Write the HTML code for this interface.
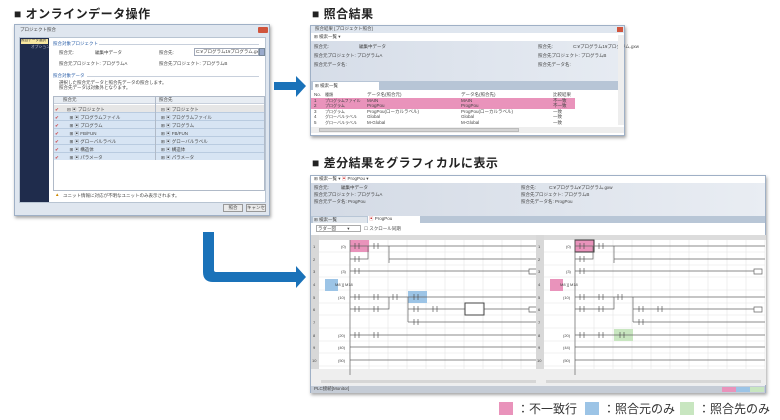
<!DOCTYPE html>
<html><head><meta charset="utf-8"><style>
*{margin:0;padding:0;box-sizing:border-box}
body{width:780px;height:420px;background:#fff;position:relative;overflow:hidden;font-family:"Liberation Sans","Noto Sans CJK JP",sans-serif;color:#333}
.a{position:absolute}
.h{font-size:12px;font-weight:bold;color:#222;letter-spacing:0.5px}
.t{font-size:4.5px;color:#444;white-space:nowrap;line-height:1}
.win{border:1px solid #9fb0c6;background:#f0f0f0;box-shadow:1px 2px 3px rgba(0,0,0,.35)}
</style></head><body>

<div class="a h" style="left:14px;top:5px">■ オンラインデータ操作</div>
<div class="a h" style="left:312px;top:5px">■ 照合結果</div>
<div class="a h" style="left:312px;top:154px">■ 差分結果をグラフィカルに表示</div>

<!-- Window 1 -->
<div class="a win" style="left:14px;top:24px;width:256px;height:192px;background:#dfe6ef">
  <div class="a t" style="left:5px;top:3px">プロジェクト照合</div>
  <div class="a" style="left:243px;top:2px;width:10px;height:6px;background:#d0553d;border-radius:1px"></div>
  <div class="a" style="left:4px;top:12px;width:247px;height:166px;background:#fff;border:1px solid #b8c4d2"></div>
  <div class="a" style="left:5px;top:13px;width:29px;height:164px;background:#1f2c4c"></div>
  <div class="a t" style="left:6px;top:14px;width:27px;height:5px;background:#f8e7a0;font-size:3.6px;color:#333;overflow:hidden">照合データ選択</div>
  <div class="a t" style="left:16px;top:21px;font-size:3.8px;color:#ccd">オプション</div>
  <div class="a t" style="left:38px;top:17px;color:#2a5ea8">照合対象プロジェクト</div>
  <div class="a" style="left:84px;top:19px;width:160px;height:1px;background:#c8d0dc"></div>
  <div class="a t" style="left:44px;top:26px">照合元:</div>
  <div class="a t" style="left:80px;top:26px">編集中データ</div>
  <div class="a t" style="left:144px;top:26px">照合先:</div>
  <div class="a t" style="left:179px;top:23px;width:65px;height:8px;border:1px solid #a0a8b8;background:#fff;padding:1px;overflow:hidden">C:¥プログラム1¥プログラム.gxw</div>
  <div class="a" style="left:244px;top:23px;width:6px;height:8px;background:#9ac;border:1px solid #789"></div>
  <div class="a t" style="left:44px;top:37px">照合元プロジェクト: プログラムA</div>
  <div class="a t" style="left:144px;top:37px">照合先プロジェクト: プログラムB</div>
  <div class="a t" style="left:38px;top:49px;color:#2a5ea8">照合対象データ</div>
  <div class="a" style="left:72px;top:51px;width:172px;height:1px;background:#c8d0dc"></div>
  <div class="a t" style="left:44px;top:56px">選択した照合元データと照合先データの照合します。</div>
  <div class="a t" style="left:44px;top:61px">照合先データは対象外となります。</div>
  <div class="a" style="left:38px;top:71px;width:212px;height:95px;border:1px solid #b0bac8;background:#fff"></div>
  <div class="a" style="left:39px;top:72px;width:210px;height:7px;background:#e8edf3;border-bottom:1px solid #c8d0dc"></div>
  <div class="a t" style="left:48px;top:73px">照合元</div>
  <div class="a t" style="left:144px;top:73px">照合先</div>
  <div class="a" style="left:39px;top:80px;width:210px;height:55px;background:repeating-linear-gradient(#d7e4f3 0 7px,#b9cbe0 7px 8px)"></div>
  <div class="a" style="left:39px;top:80px;width:210px;height:7px;background:#e6e6e6"></div>
  <div class="a" style="left:140px;top:72px;width:1px;height:63px;background:#b0bac8"></div>
  <div class="a t" style="left:40px;top:81px;color:#c33;line-height:8px">✔<br>✔<br>✔<br>✔<br>✔<br>✔<br>✔</div>
  <div class="a t" style="left:52px;top:81px;line-height:8px">⊟ ▣ プロジェクト<br>&nbsp;&nbsp;⊞ ▣ プログラムファイル<br>&nbsp;&nbsp;⊞ ▣ プログラム<br>&nbsp;&nbsp;⊞ ▣ FB/FUN<br>&nbsp;&nbsp;⊞ ▣ グローバルラベル<br>&nbsp;&nbsp;⊞ ▣ 構造体<br>&nbsp;&nbsp;⊞ ▣ パラメータ</div>
  <div class="a t" style="left:146px;top:81px;line-height:8px">⊟ ▣ プロジェクト<br>⊞ ▣ プログラムファイル<br>⊞ ▣ プログラム<br>⊞ ▣ FB/FUN<br>⊞ ▣ グローバルラベル<br>⊞ ▣ 構造体<br>⊞ ▣ パラメータ</div>
  <div class="a t" style="left:40px;top:168px;color:#c80">▲</div>
  <div class="a t" style="left:48px;top:169px">ユニット情報に対応が不明なユニットのみ表示されます。</div>
  <div class="a t" style="left:208px;top:179px;width:20px;height:8px;border:1px solid #999;background:#eaeaea;text-align:center;padding-top:1px">照合</div>
  <div class="a t" style="left:231px;top:179px;width:20px;height:8px;border:1px solid #999;background:#eaeaea;text-align:center;padding-top:1px;overflow:hidden">キャンセル</div>
</div>

<!-- Arrow 1 -->
<svg class="a" style="left:274px;top:74px" width="34" height="26"><path d="M0 8H22V2L32 12L22 23V16H0Z" fill="#1a72b9"/></svg>
<!-- Arrow 2 -->
<svg class="a" style="left:200px;top:230px" width="108" height="62"><path d="M3 2H14V40Q14 42 16 42H96V36L106 47L96 58V52H13Q3 52 3 42Z" fill="#1a72b9"/></svg>

<!-- Window 2 -->
<div class="a win" style="left:310px;top:25px;width:315px;height:111px;background:#fff">
  <div class="a" style="left:0;top:0;width:313px;height:7px;background:#dfe6ef"></div>
  <div class="a t" style="left:4px;top:1px">照合結果 [プロジェクト照合]</div>
  <div class="a" style="left:306px;top:1px;width:6px;height:5px;background:#d0553d"></div>
  <div class="a t" style="left:3px;top:9px">⊞ 検索一覧 ▾</div>
  <div class="a" style="left:0;top:15px;width:307px;height:40px;background:linear-gradient(90deg,#d6dde8,#e6ebf2)"></div>
  <div class="a t" style="left:3px;top:19px">照合元:</div><div class="a t" style="left:48px;top:19px">編集中データ</div>
  <div class="a t" style="left:3px;top:28px">照合元プロジェクト: プログラムA</div>
  <div class="a t" style="left:3px;top:37px">照合元データ名:</div>
  <div class="a t" style="left:227px;top:19px">照合先:</div><div class="a t" style="left:262px;top:19px">C:¥プログラム1¥プログラム.gxw</div>
  <div class="a t" style="left:227px;top:28px">照合先プロジェクト: プログラムB</div>
  <div class="a t" style="left:227px;top:37px">照合先データ名:</div>
  <div class="a" style="left:0;top:55px;width:307px;height:9px;background:#b7c5d6"></div>
  <div class="a t" style="left:2px;top:56px;width:66px;height:8px;background:#fff;padding:2px">⊞ 検索一覧</div>
  <div class="a" style="left:307px;top:9px;width:6px;height:90px;background:#eee"></div>
  <div class="a" style="left:0;top:72px;width:264px;height:11px;background:#e993bb"></div>
  <div class="a t" style="left:3px;top:66px;line-height:5.5px">No.<br>1<br>2<br>3<br>4<br>5</div>
  <div class="a t" style="left:14px;top:66px;line-height:5.5px;font-size:4px">種類<br>プログラムファイル<br>プログラム<br>プログラム<br>グローバルラベル<br>グローバルラベル</div>
  <div class="a t" style="left:56px;top:66px;line-height:5.5px">データ名(照合元)<br>MAIN<br>ProgPou<br>ProgPou(ローカルラベル)<br>Global<br>M-Global</div>
  <div class="a t" style="left:150px;top:66px;line-height:5.5px">データ名(照合先)<br>MAIN<br>ProgPou<br>ProgPou(ローカルラベル)<br>Global<br>M-Global</div>
  <div class="a t" style="left:242px;top:66px;line-height:5.5px">比較結果<br>不一致<br>不一致<br>一致<br>一致<br>一致</div>
  <div class="a" style="left:0;top:101px;width:313px;height:6px;background:#eee"></div>
  <div class="a" style="left:8px;top:102px;width:200px;height:4px;background:#d4d4d4;border:1px solid #bbb"></div>
</div>

<!-- Window 3 -->
<div class="a win" style="left:310px;top:175px;width:456px;height:218px;background:#eceef1">
  <div class="a" style="left:0;top:0;width:454px;height:7px;background:#fff"></div>
  <div class="a t" style="left:3px;top:1px">⊞ 検索一覧 ▾ <span style="color:#c33">▣</span> ProgPou ▾</div>
  <div class="a" style="left:0;top:7px;width:454px;height:33px;background:linear-gradient(90deg,#d3dae5,#e9edf3)"></div>
  <div class="a t" style="left:3px;top:10px">照合元:</div><div class="a t" style="left:30px;top:10px">編集中データ</div>
  <div class="a t" style="left:3px;top:17px">照合元プロジェクト: プログラムA</div>
  <div class="a t" style="left:3px;top:24px">照合元データ名: ProgPou</div>
  <div class="a t" style="left:210px;top:10px">照合先:</div><div class="a t" style="left:238px;top:10px">C:¥プログラム¥プログラム.gxw</div>
  <div class="a t" style="left:210px;top:17px">照合先プロジェクト: プログラムB</div>
  <div class="a t" style="left:210px;top:24px">照合先データ名: ProgPou</div>
  <div class="a" style="left:0;top:40px;width:454px;height:7px;background:#b8c6d6"></div>
  <div class="a t" style="left:2px;top:41px;width:54px;height:6px;background:#dfe5ec;padding:1px">⊞ 検索一覧</div>
  <div class="a t" style="left:57px;top:40px;width:52px;height:7px;background:#fff;padding:1px"><span style="color:#c33">▣</span> ProgPou</div>
  <div class="a" style="left:0;top:47px;width:454px;height:12px;background:#fff"></div>
  <div class="a t" style="left:5px;top:49px;width:45px;height:7px;border:1px solid #aaa;padding:1px">ラダー図&nbsp;&nbsp;&nbsp;&nbsp;&nbsp;&nbsp;&nbsp;&nbsp;&nbsp;▾</div>
  <div class="a t" style="left:53px;top:51px">☐ スクロール同期</div>
  <div class="a" style="left:0;top:210px;width:454px;height:7px;background:#c5ccd6"></div>
  <div class="a t" style="left:3px;top:211px">PLC接続[Monitor]</div>
  <div class="a" style="left:411px;top:211px;width:14px;height:5px;background:#e993bb"></div>
  <div class="a" style="left:425px;top:211px;width:14px;height:5px;background:#9cc4e6"></div>
  <div class="a" style="left:439px;top:211px;width:14px;height:5px;background:#c8e6c0"></div>
</div>

<!-- Ladder panels -->
<svg class="a" style="left:311px;top:235px" width="230" height="150">
 <rect width="230" height="150" fill="#fff"/>
 <rect width="230" height="5" fill="#dcdcdc"/><rect width="8" height="134" fill="#d8d8d8"/>
 <rect y="134" width="230" height="16" fill="#eee"/>
 <g stroke="#e4e4e4" stroke-width=".6">
  <path d="M39 5V134M58 5V134M77 5V134M96 5V134M115 5V134M134 5V134M153 5V134M172 5V134M191 5V134M210 5V134M229 5V134"/>
  <path d="M8 17H229M8 30H229M8 42H229M8 55H229M8 68H229M8 80H229M8 93H229M8 106H229M8 118H229M8 131H229"/>
 </g>
 <rect x="39" y="5" width="19" height="12" fill="#e993bb"/>
 <rect x="14" y="44" width="13" height="12" fill="#9cc4e6"/>
 <rect x="97" y="56" width="19" height="12" fill="#9cc4e6"/>
 <g stroke="#666" stroke-width=".7" fill="none">
  <path d="M39 5V140"/>
  <path d="M39 11H229M39 24H57V11M78 11V28M78 24H229"/>
  <path d="M39 36H218M218 34h8v5h-8z"/>
  <path d="M39 62H229M39 74H78V62M97 62V87M97 74H154M173 74H218M218 72h8v5h-8zM97 87H229"/>
  <path d="M39 100H229M39 112H229M39 125H229"/>
  <path d="M154 68h19v12h-19z" stroke="#444" stroke-width="1"/>
 </g>
 <g fill="#fff" stroke="#444" stroke-width=".6">
  <path d="M44 8v6M48 8v6M63 8v6M67 8v6M44 21v6M48 21v6M44 33v6M48 33v6M44 59v6M48 59v6M63 59v6M67 59v6M82 59v6M86 59v6M103 59v6M107 59v6M44 71v6M48 71v6M63 71v6M67 71v6M103 71v6M107 71v6M122 71v6M126 71v6M103 84v6M107 84v6M44 97v6M48 97v6M63 97v6M67 97v6"/>
 </g>
 <g font-size="4" fill="#444" font-family="Liberation Sans">
  <text x="2" y="13">1</text><text x="2" y="26">2</text><text x="2" y="38">3</text><text x="2" y="51">4</text><text x="2" y="64">5</text><text x="2" y="76">6</text><text x="2" y="89">7</text><text x="2" y="102">8</text><text x="2" y="114">9</text><text x="1" y="127">10</text>
  <text x="30" y="13">(0)</text><text x="30" y="38">(3)</text><text x="27" y="64">(10)</text><text x="27" y="102">(20)</text><text x="27" y="114">(40)</text><text x="27" y="127">(50)</text><text x="24" y="51">M8 ][ M18</text>
 </g>
 <rect x="10" y="145" width="215" height="3" fill="#d6d6d6"/>
</svg>

<svg class="a" style="left:536px;top:235px" width="230" height="150">
 <rect width="230" height="150" fill="#fff"/>
 <rect width="230" height="5" fill="#dcdcdc"/><rect width="8" height="134" fill="#d8d8d8"/>
 <rect y="134" width="230" height="16" fill="#eee"/>
 <g stroke="#e4e4e4" stroke-width=".6">
  <path d="M39 5V134M58 5V134M77 5V134M96 5V134M115 5V134M134 5V134M153 5V134M172 5V134M191 5V134M210 5V134M229 5V134"/>
  <path d="M8 17H229M8 30H229M8 42H229M8 55H229M8 68H229M8 80H229M8 93H229M8 106H229M8 118H229M8 131H229"/>
 </g>
 <rect x="39" y="5" width="19" height="12" fill="#e993bb" stroke="#333" stroke-width="1"/>
 <rect x="14" y="44" width="13" height="12" fill="#e993bb"/>
 <rect x="78" y="94" width="19" height="12" fill="#c8e6c0"/>
 <g stroke="#666" stroke-width=".7" fill="none">
  <path d="M39 5V140"/>
  <path d="M39 11H229M39 24H57V11M78 11V28M78 24H229"/>
  <path d="M39 36H218M218 34h8v5h-8z"/>
  <path d="M39 62H229M39 74H78V62M97 62V87M97 74H218M218 72h8v5h-8zM97 87H229"/>
  <path d="M39 100H229M39 112H229M39 125H229"/>
 </g>
 <g stroke="#444" stroke-width=".6">
  <path d="M44 8v6M48 8v6M63 8v6M67 8v6M44 21v6M48 21v6M44 33v6M48 33v6M44 59v6M48 59v6M63 59v6M67 59v6M82 59v6M86 59v6M103 71v6M107 71v6M122 71v6M126 71v6M103 84v6M107 84v6M44 71v6M48 71v6M63 71v6M67 71v6M44 97v6M48 97v6M63 97v6M67 97v6M84 97v6M88 97v6"/>
 </g>
 <g font-size="4" fill="#444" font-family="Liberation Sans">
  <text x="2" y="13">1</text><text x="2" y="26">2</text><text x="2" y="38">3</text><text x="2" y="51">4</text><text x="2" y="64">5</text><text x="2" y="76">6</text><text x="2" y="89">7</text><text x="2" y="102">8</text><text x="2" y="114">9</text><text x="1" y="127">10</text>
  <text x="30" y="13">(0)</text><text x="30" y="38">(3)</text><text x="27" y="64">(10)</text><text x="27" y="102">(20)</text><text x="27" y="114">(44)</text><text x="27" y="127">(50)</text><text x="24" y="51">M8 ][ M18</text>
 </g>
 <rect x="10" y="145" width="215" height="3" fill="#d6d6d6"/>
</svg>

<!-- Legend -->
<div class="a" style="left:499px;top:402px;width:14px;height:13px;background:#e993bb"></div>
<div class="a" style="left:517px;top:400px;font-size:12px;color:#333">：不一致行</div>
<div class="a" style="left:585px;top:402px;width:14px;height:13px;background:#9cc4e6"></div>
<div class="a" style="left:603px;top:400px;font-size:12px;color:#333">：照合元のみ</div>
<div class="a" style="left:680px;top:402px;width:14px;height:13px;background:#c8e6c0"></div>
<div class="a" style="left:698px;top:400px;font-size:12px;color:#333">：照合先のみ</div>
</body></html>
